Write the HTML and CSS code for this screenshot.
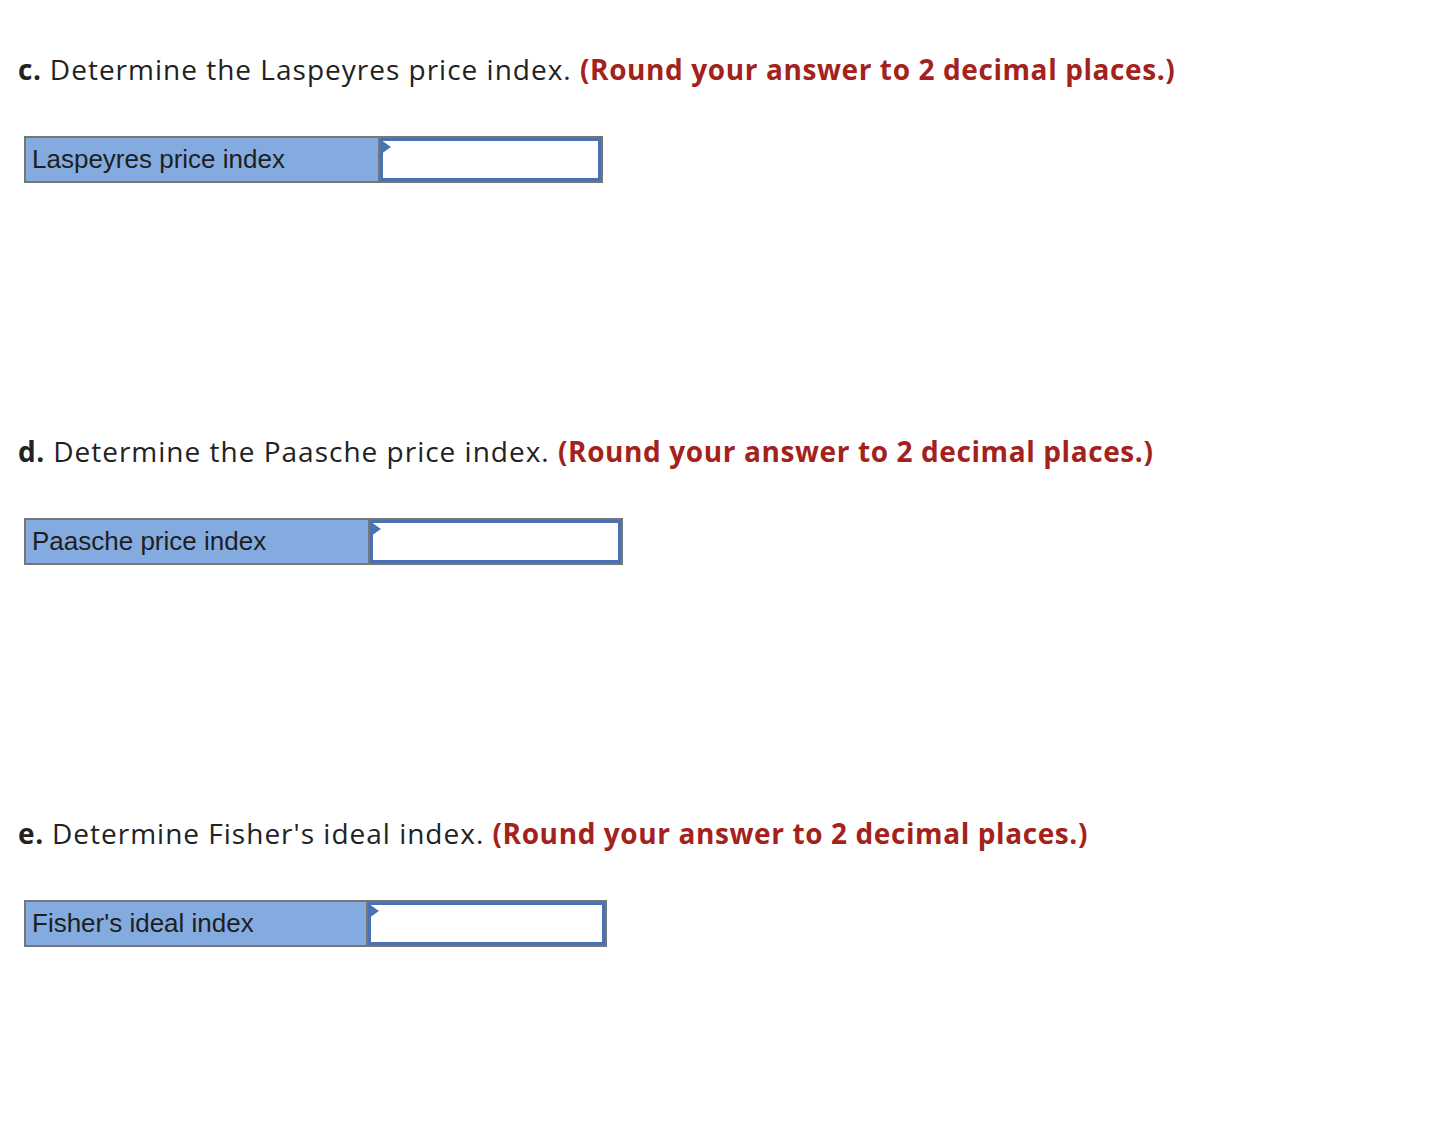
FILE: index.html
```html
<!DOCTYPE html>
<html lang="en">
<head>
<meta charset="utf-8">
<title>Price indexes</title>
<link rel="stylesheet" href="styles.css">
</head>
<body>
<div class="page">
  <section class="question">
    <p class="prompt"><b>c.</b> Determine the Laspeyres price index. <span class="hint">(Round your answer to 2 decimal places.)</span></p>
    <table class="answer answer-c">
      <tr>
        <td class="label">Laspeyres price index</td>
        <td class="field"><input type="text" aria-label="Laspeyres price index"></td>
      </tr>
    </table>
  </section>
  <section class="question">
    <p class="prompt"><b>d.</b> Determine the Paasche price index. <span class="hint">(Round your answer to 2 decimal places.)</span></p>
    <table class="answer answer-d">
      <tr>
        <td class="label">Paasche price index</td>
        <td class="field"><input type="text" aria-label="Paasche price index"></td>
      </tr>
    </table>
  </section>
  <section class="question last">
    <p class="prompt"><b>e.</b> Determine Fisher's ideal index. <span class="hint">(Round your answer to 2 decimal places.)</span></p>
    <table class="answer answer-e">
      <tr>
        <td class="label">Fisher's ideal index</td>
        <td class="field"><input type="text" aria-label="Fisher's ideal index"></td>
      </tr>
    </table>
  </section>
</div>
</body>
</html>
```

FILE: styles.css
```css
* { box-sizing: border-box; }
html, body { margin: 0; padding: 0; background: #fff; }
body { font-family: "Open Sans", Lato, sans-serif; color: #222; }

.page { padding: 51px 0 0 18px; }

.question { height: 382px; }
.question.last { height: auto; }

.prompt {
  margin: 0;
  font-size: 28px;
  line-height: 36px;
  color: #222;
  letter-spacing: 1px;
}
.prompt b { font-weight: 700; letter-spacing: 0.6px; }
.hint { color: #a3221c; font-weight: 700; letter-spacing: 0.6px; }

.answer {
  margin: 49px 0 0 6px;
  border-collapse: collapse;
  border: 2px solid #767676;
  height: 47px;
  font-family: "Liberation Sans", Arial, sans-serif;
  letter-spacing: 0;
}
.answer td {
  border: 2px solid #767676;
  padding: 0;
  height: 43px;
}
.label {
  background: #84abe0;
  color: #1e1e1e;
  font-size: 26px;
  padding: 0 0 0 6px !important;
  vertical-align: middle;
}
.field { position: relative; }
.field::before {
  content: "";
  position: absolute;
  left: 1px;
  top: 2px;
  border-top: 7px solid transparent;
  border-bottom: 7px solid transparent;
  border-left: 10px solid #4a72b3;
}
.field input {
  display: block;
  width: 100%;
  height: 43px;
  margin: 0;
  border: 3px solid #4a72b3;
  background: #fff;
  outline: none;
}

.answer-c .label { width: 354px; }
.answer-c .field { width: 223px; }
.answer-d .label { width: 344px; }
.answer-d .field { width: 253px; }
.answer-e .label { width: 342px; }
.answer-e .field { width: 239px; }
```
